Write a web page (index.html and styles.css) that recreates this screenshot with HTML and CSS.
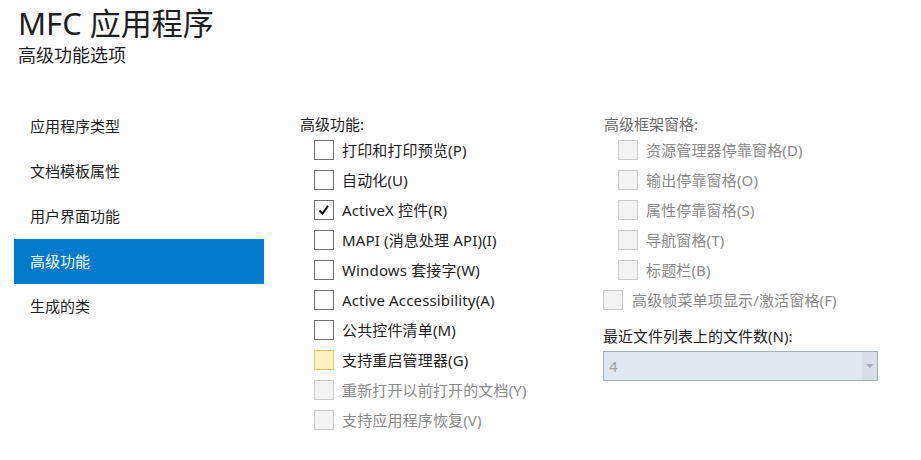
FILE: index.html
```html
<!DOCTYPE html>
<html lang="zh-CN">
<head>
<meta charset="utf-8">
<title>MFC 应用程序</title>
<link rel="stylesheet" href="styles.css">
</head>
<body>
<header class="head">
  <h1 class="title">MFC 应用程序</h1>
  <div class="subtitle">高级功能选项</div>
</header>
<main class="main">
  <nav class="nav">
    <div class="nav-item">应用程序类型</div>
    <div class="nav-item">文档模板属性</div>
    <div class="nav-item">用户界面功能</div>
    <div class="nav-item active">高级功能</div>
    <div class="nav-item">生成的类</div>
  </nav>
  <section class="col col-mid">
    <div class="group-label">高级功能:</div>
    <div class="row indent"><span class="box"></span><span class="lbl">打印和打印预览(P)</span></div>
    <div class="row indent"><span class="box"></span><span class="lbl">自动化(U)</span></div>
    <div class="row indent"><span class="box"><svg class="check" viewBox="0 0 20 20" width="18" height="18"><path d="M5 10.5 L8.3 14 L14.5 5.5" fill="none" stroke="#111" stroke-width="2.2"/></svg></span><span class="lbl">ActiveX 控件(R)</span></div>
    <div class="row indent"><span class="box"></span><span class="lbl">MAPI (消息处理 API)(I)</span></div>
    <div class="row indent"><span class="box"></span><span class="lbl">Windows 套接字(W)</span></div>
    <div class="row indent"><span class="box"></span><span class="lbl">Active Accessibility(A)</span></div>
    <div class="row indent"><span class="box"></span><span class="lbl">公共控件清单(M)</span></div>
    <div class="row indent"><span class="box hot"></span><span class="lbl">支持重启管理器(G)</span></div>
    <div class="row indent disabled"><span class="box"></span><span class="lbl">重新打开以前打开的文档(Y)</span></div>
    <div class="row indent disabled"><span class="box"></span><span class="lbl">支持应用程序恢复(V)</span></div>
  </section>
  <section class="col col-right">
    <div class="group-label muted">高级框架窗格:</div>
    <div class="row indent disabled"><span class="box"></span><span class="lbl">资源管理器停靠窗格(D)</span></div>
    <div class="row indent disabled"><span class="box"></span><span class="lbl">输出停靠窗格(O)</span></div>
    <div class="row indent disabled"><span class="box"></span><span class="lbl">属性停靠窗格(S)</span></div>
    <div class="row indent disabled"><span class="box"></span><span class="lbl">导航窗格(T)</span></div>
    <div class="row indent disabled"><span class="box"></span><span class="lbl">标题栏(B)</span></div>
    <div class="row disabled"><span class="box"></span><span class="lbl">高级帧菜单项显示/激活窗格(F)</span></div>
    <div class="field-label">最近文件列表上的文件数(N):</div>
    <div class="combo">
      <span class="combo-val">4</span>
      <span class="combo-btn"><svg viewBox="0 0 8 4" width="8" height="4"><path d="M0 0 H8 L4 4 Z" fill="#a8adb5"/></svg></span>
    </div>
  </section>
</main>
</body>
</html>
```
FILE: styles.css
```css
* { box-sizing: border-box; }
html, body {
  margin: 0;
  padding: 0;
  background: #ffffff;
}
body {
  width: 921px;
  height: 460px;
  overflow: hidden;
  font-family: "Noto Sans", "Noto Sans CJK SC", sans-serif;
  color: #1e1e1e;
  font-size: 15px;
}
.head {
  padding: 3px 0 0 18px;
}
.title {
  margin: 0;
  font-weight: 400;
  font-size: 31px;
  line-height: 40px;
  color: #1e1e1e;
}
.subtitle {
  font-size: 18px;
  line-height: 22px;
  margin-top: 1px;
}
.main {
  display: flex;
  margin-top: 38px;
}
.nav {
  margin-left: 14px;
  width: 250px;
  display: flex;
  flex-direction: column;
}
.nav-item {
  height: 45px;
  line-height: 45px;
  padding-left: 16px;
  font-size: 15px;
  color: #1e1e1e;
}
.nav-item.active {
  background: #007acc;
  color: #ffffff;
}
.col {
  display: flex;
  flex-direction: column;
  padding-top: 10px;
}
.col-mid {
  margin-left: 35px;
  width: 304px;
}
.col-right {
  width: 280px;
}
.group-label {
  height: 20px;
  line-height: 20px;
  margin-bottom: 1px;
  padding-left: 1px;
}
.group-label.muted { color: #6d6d6d; }
.row {
  height: 30px;
  display: flex;
  align-items: center;
}
.row.indent { padding-left: 15px; }
.box {
  width: 20px;
  height: 20px;
  border: 1px solid #717171;
  background: #ffffff;
  flex: none;
  display: flex;
  align-items: center;
  justify-content: center;
}
.box.hot {
  background: #fff3c2;
  border-color: #e9c35c;
}
.lbl {
  margin-left: 8px;
  line-height: 20px;
  letter-spacing: 0.15px;
}
.row.disabled .box {
  border-color: #cccccc;
  background: #f3f3f3;
}
.row.disabled .lbl { color: #8a8a8a; }
.row:not(.indent) .lbl { margin-left: 9px; }
.field-label {
  margin-top: 11px;
  height: 20px;
  line-height: 20px;
}
.combo {
  margin-top: 5px;
  width: 275px;
  height: 30px;
  border: 1px solid #a6afbd;
  background: #e1e7f1;
  display: flex;
  align-items: center;
}
.combo-val {
  flex: 1;
  padding-left: 5px;
  color: #a2a2a2;
  font-size: 15px;
}
.combo-btn {
  width: 15px;
  height: 28px;
  background: #d8dde6;
  display: flex;
  align-items: center;
  justify-content: center;
}
.combo-btn svg { display: block; }
```
